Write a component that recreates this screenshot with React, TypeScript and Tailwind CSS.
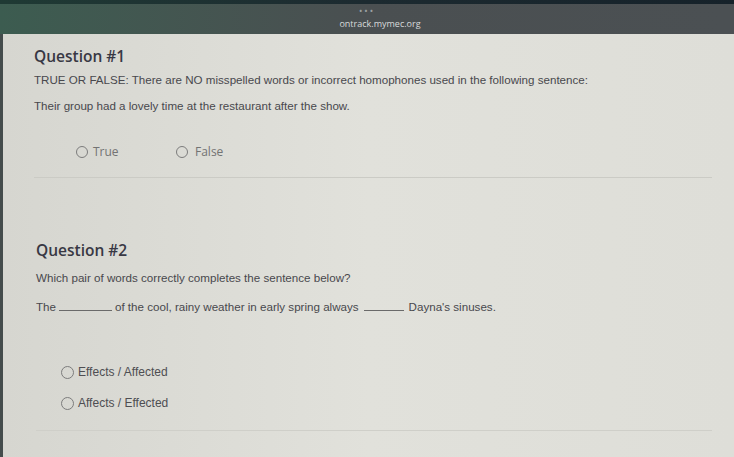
import React from "react";

const sans = { fontFamily: '"Liberation Sans", Arial, sans-serif' };

function Radio({ size = 12 }: { size?: number }) {
  return (
    <span
      className="inline-block rounded-full border-[1.5px] border-[#7c7c7c] shrink-0"
      style={{ width: size, height: size }}
    />
  );
}

const App = () => {
  return (
    <div className="w-[734px] h-[457px] overflow-hidden flex flex-col bg-[#dcdcd6]">
      <div className="h-[4px] bg-gradient-to-r from-[#1f3a34] via-[#1c2a30] to-[#16222a]" />
      <div className="h-[30px] flex flex-col items-center justify-center bg-gradient-to-r from-[#3c5c50] via-[#4a4f51] to-[#4b5053] pl-[26px]">
        <div className="text-[9px] leading-[8px] tracking-[2px] text-[#9aa0a2] mr-[26px]">•••</div>
        <div
          className="text-[9px] leading-[14px] text-[#d8dadb] mt-[2px]"
          style={{ fontFamily: '"Open Sans", sans-serif' }}
        >
          ontrack.mymec.org
        </div>
      </div>
      <div className="flex-1 border-l-[3px] border-[#444c4c] bg-gradient-to-r from-[#d6d6d0] via-[#e1e1db] to-[#deded8] pl-[31px] pr-[22px] pt-[12px]">
        {/* Question 1 */}
        <h2
          className="text-[15.5px] leading-[20px] font-semibold text-[#383844]"
          style={{ fontFamily: '"Open Sans", sans-serif' }}
        >
          Question #1
        </h2>
        <p className="mt-[6px] text-[11.6px] leading-[16px] text-[#48484d]" style={sans}>
          TRUE OR FALSE: There are NO misspelled words or incorrect homophones used in the following sentence:
        </p>
        <p className="mt-[10px] text-[11.6px] leading-[16px] text-[#48484d]" style={sans}>
          Their group had a lovely time at the restaurant after the show.
        </p>
        <div
          className="mt-[30px] ml-[42px] flex h-[16px] items-center text-[12px] text-[#737373]"
          style={{ fontFamily: '"Open Sans", sans-serif' }}
        >
          <label className="w-[100px] flex items-center gap-[5px]">
            <Radio />
            <span>True</span>
          </label>
          <label className="flex items-center gap-[7px]">
            <Radio />
            <span>False</span>
          </label>
        </div>
        <div className="mt-[17px] h-px bg-[#cbcbc5]" />

        {/* Question 2 */}
        <div className="ml-[2px]">
          <h2
            className="mt-[62px] text-[15.5px] leading-[20px] font-semibold text-[#383844]"
            style={{ fontFamily: '"Open Sans", sans-serif' }}
          >
            Question #2
          </h2>
          <p className="mt-[10px] text-[11.6px] leading-[16px] text-[#48484d]" style={sans}>
            Which pair of words correctly completes the sentence below?
          </p>
          <p className="mt-[13px] text-[11.6px] leading-[16px] text-[#48484d]" style={sans}>
            The
            <span className="inline-block w-[53px] mx-[3px] border-b border-[#6a6a6a] align-baseline" />
            of the cool, rainy weather in early spring always
            <span className="inline-block w-[40px] mx-[5px] border-b border-[#6a6a6a] align-baseline" />
            Dayna&apos;s sinuses.
          </p>
          <div
            className="mt-[49px] ml-[25px] flex h-[16px] items-center gap-[4px] text-[12px] text-[#4e4e52]"
            style={sans}
          >
            <Radio size={13} />
            <span>Effects / Affected</span>
          </div>
          <div
            className="mt-[15px] ml-[25px] flex h-[16px] items-center gap-[4px] text-[12px] text-[#4e4e52]"
            style={sans}
          >
            <Radio size={13} />
            <span>Affects / Effected</span>
          </div>
          <div className="mt-[19px] h-px bg-[#cfcfc9]" />
        </div>
      </div>
    </div>
  );
};

export default App;
